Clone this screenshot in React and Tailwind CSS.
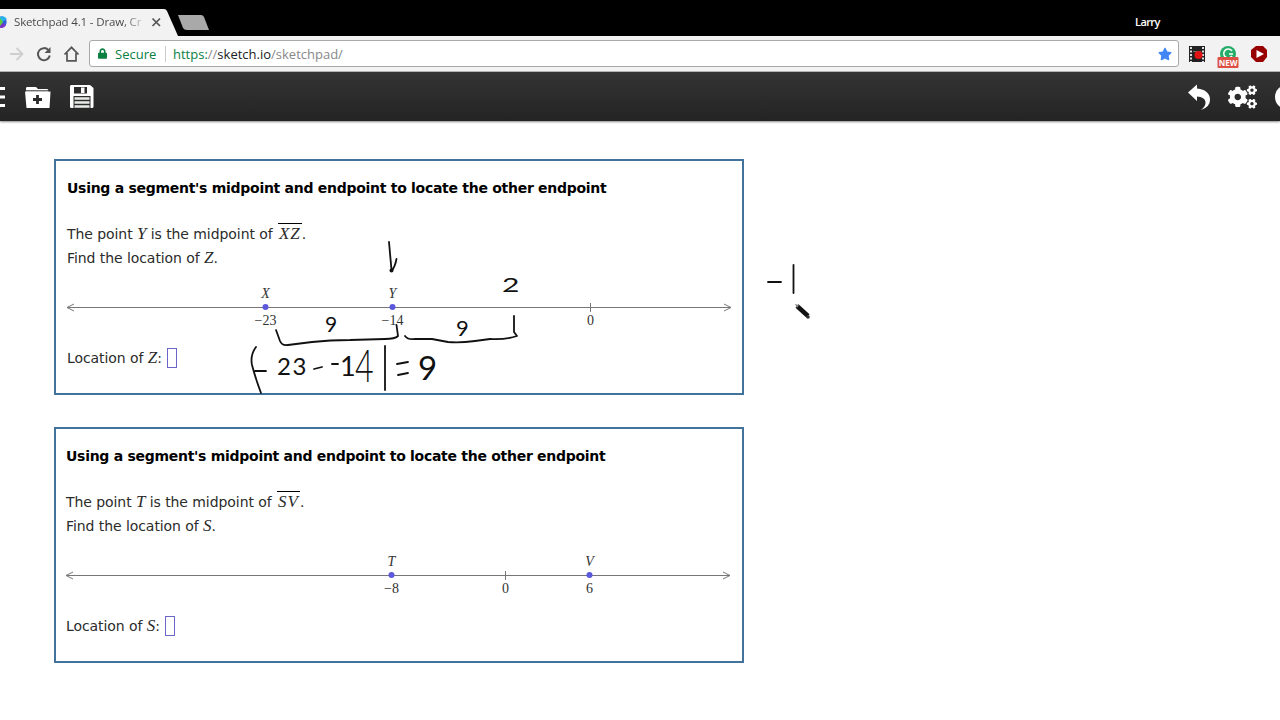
import { FaCogs, FaStar, FaLock } from 'react-icons/fa';

const PROBLEMS = [
    {
        mid: 'Y', seg: 'XZ', find: 'Z', pad: 'pl-px',
        ticks: [
            { x: 209, label: 'X', value: '−23', dot: true },
            { x: 336, label: 'Y', value: '−14', dot: true },
            { x: 534, value: '0' },
        ],
    },
    {
        mid: 'T', seg: 'SV', find: 'S', pad: 'pl-0',
        ticks: [
            { x: 336, label: 'T', value: '−8', dot: true },
            { x: 450, value: '0' },
            { x: 534, label: 'V', value: '6', dot: true },
        ],
    },
];

const BrowserTabs = () => (
    <div className="h-9 bg-black flex items-end relative">
        <svg className="w-[212px] h-[27px] shrink-0" viewBox="0 0 212 27">
            <path d="M0 0H164Q166 0 167 2L178 27H0Z" fill="#f2f2f2" />
            <path d="M178 6H201Q203 6 204 8L209 21H187Q184 21 183 19Z" fill="#a9a9a9" />
            {/* Favicon */}
            <path d="M0 7.500H3A6 6 0 0 1 3 18.500H0Z" fill="#2f62d9" />
            <path d="M0 8Q4 6 7 10L0 14Z" fill="#27b2e8" />
            <path d="M0 13L6 16Q4 19.500 0 19Z" fill="#7a35c4" />
            <path d="M0 9L3 13L0 17Z" fill="#5fce3a" />
            <path d="M152.500 9.500L160 17M160 9.500L152.500 17" stroke="#555" strokeWidth="1.700" />
        </svg>
        <div className="absolute left-[14px] top-[14px] w-[133px] whitespace-nowrap text-[11.5px] tracking-[-0.16px] leading-4 bg-gradient-to-r from-[#444] from-82% to-[#f2f2f2] bg-clip-text text-transparent">
            Sketchpad 4.1 - Draw, Cr
        </div>
        <span className="absolute left-[1135px] top-[14px] text-[11px] tracking-[-0.6px] leading-4 font-semibold text-white">Larry</span>
    </div>
);

const AddressBar = () => (
    <div className="h-9 bg-[#f2f2f2] border-b border-[#b5b5b5] flex items-center">
        <svg className="w-[89px] h-9 shrink-0" viewBox="0 0 89 36" fill="none">
            <path d="M10 18H22M16.500 12L22.500 18L16.500 24" stroke="#cfcfcf" strokeWidth="1.800" />
            <path d="M48.500 14.200A6 6 0 1 0 49.800 19.500" stroke="#555" strokeWidth="2" />
            <path d="M50.500 11V17H44.500Z" fill="#555" />
            <path d="M64.500 18.500L71.500 11.300L78.500 18.500M67 17V24.800H76V17" stroke="#555" strokeWidth="1.700" />
        </svg>
        <div className="w-[1090px] h-[27px] bg-white border border-[#a9a9a9] rounded-[3px] flex items-center text-[13px] leading-5 pl-2 pr-1.5">
            <FaLock className="w-[9px] h-[11px] text-[#0b8043] mr-[8px]" />
            <span className="text-[#0b8043] w-[50px] whitespace-nowrap">Secure</span>
            <span className="w-px h-4 bg-[#ccc] mr-[7px]" />
            <span className="whitespace-nowrap text-[#888]">
                <span className="text-[#0b8043]">https:</span>//<span className="text-[#222]">sketch.io</span>/sketchpad/
            </span>
            <FaStar className="ml-auto w-[14px] h-[14px] text-[#4285f4]" />
        </div>
        <Extensions />
    </div>
);

const Extensions = () => (
    <svg className="w-[101px] h-9 shrink-0" viewBox="0 0 101 36">
        <rect x="10" y="10" width="16" height="16" fill="#222" />
        <path d="M12 11V26M24 11V26" stroke="#ddd" strokeWidth="2" strokeDasharray="2 1.500" />
        <path d="M14 15.500H22" stroke="#777" strokeWidth="1" />
        <circle cx="19.500" cy="19" r="4" fill="#e11313" />
        <circle cx="49" cy="18" r="8" fill="#24ad69" />
        <path d="M53 15A4.500 4.500 0 1 0 53 20M50 18H54" stroke="white" strokeWidth="1.500" fill="none" />
        <rect x="38.500" y="21" width="21" height="11" rx="1" fill="#dd5044" />
        <text x="49" y="29.500" textAnchor="middle" fontSize="8" fontWeight="700" fill="white">NEW</text>
        <path d="M77 10H84L88 14V21L84 26H77L72 21V14Z" fill="#980000" />
        <path d="M77.500 14L85 18L77.500 22Z" fill="white" />
    </svg>
);

const Toolbar = () => (
    <div className="h-[49px] bg-linear-to-b from-[#343434] to-[#242424] flex items-center shadow-[0_1px_2px_#888]">
        <svg className="w-[100px] h-[49px]" viewBox="0 0 100 49">
            <path d="M0 16.500H5M0 25H5M0 33.500H5" stroke="white" strokeWidth="3" />
            {/* New document */}
            <path d="M26 20V16Q26 15 27.500 15H36L38 17H47Q48.500 17 48.500 20Z" fill="white" />
            <path d="M25 19.500H50.500L49.500 36H26.500Z" fill="white" />
            <path d="M25.500 18.800H50" stroke="#333" strokeWidth="1" />
            <path d="M37.500 23V32M33 27.500H42" stroke="#2b2b2b" strokeWidth="2.800" />
            {/* Save */}
            <path d="M71 13H90L93.500 16V34.500Q93.500 36 92 36H71.500Q70 36 70 34.500V14.500Q70 13 71 13Z" fill="white" />
            <path d="M74 15H87V21.500H74ZM73.500 24H90.500V36H73.500Z" fill="#2d2d2d" />
            <rect x="81" y="15.500" width="3.500" height="5.500" fill="white" />
            <path d="M74.500 26.500H89.500M74.500 30.500H89.500M74.500 34.500H89.500" stroke="#e8ece8" strokeWidth="2.300" />
        </svg>
        <svg className="ml-auto w-[26px] h-[30px]" viewBox="0 0 26 30">
            <path d="M2 10.500L11 2.500V6.500Q24 8 24 18Q24 25 15 28Q20 24 19.500 20Q19 15 11 14.500V19Z" fill="white" />
        </svg>
        <FaCogs className="ml-[16px] w-[29px] h-[28px] text-white" />
        <svg className="ml-[18px] w-[5px] h-6" viewBox="0 0 5 24">
            <circle cx="12" cy="12" r="12" fill="white" />
        </svg>
    </div>
);

const Var = ({ children }) => (
    <i className="font-['Liberation_Serif',serif] text-[17px] leading-none">{children}</i>
);

const NumberLine = ({ ticks }) => (
    <svg className="block w-[686px] h-[50px]" viewBox="0 0 686 50" fontFamily="'Liberation Serif', serif">
        <path d="M10 26.500H674M17 23L10 26.500L17 30M667 23L674 26.500L667 30" stroke="#777" fill="none" />
        {ticks.map((t) => (
            <g key={t.x} textAnchor="middle" fontSize="14" fill="#333">
                {t.label && <text x={t.x - 0.500} y="17" fontStyle="italic">{t.label}</text>}
                {t.dot
                    ? <circle cx={t.x - 0.500} cy="26" r="3" fill="#5b58dc" />
                    : <path d={`M${t.x - 0.500} 22V31`} stroke="#777" />}
                <text x={t.x - 0.500} y="44">{t.value}</text>
            </g>
        ))}
    </svg>
);

const ProblemCard = ({ problem }) => (
    <section className="w-[690px] h-[236px] border-2 border-[#42739c] bg-white text-[#2b2b2b] font-['DejaVu_Sans',sans-serif] text-[14px]">
        <div className={problem.pad}>
            <h2 className="pl-[10px] pt-[15px] leading-6 font-bold text-black whitespace-nowrap tracking-[-0.28px]">
                Using a segment's midpoint and endpoint to locate the other endpoint
            </h2>
            <div className="pl-[10px] pt-[23px] leading-[23.500px] tracking-[-0.07px] whitespace-nowrap">
                <p className="h-[23.500px]">
                    The point <Var>{problem.mid}</Var> is the midpoint of{' '}
                    <span className="inline-block leading-[20px] border-t border-black px-px tracking-[1px] ml-px"><Var>{problem.seg}</Var></span>.
                </p>
                <p className="h-[23.500px]">Find the location of <Var>{problem.find}</Var>.</p>
            </div>
            <div className="pt-[11px]">
                <NumberLine ticks={problem.ticks} />
            </div>
            <div className="pl-[10px] pt-[15px] flex items-center leading-6 tracking-[-0.07px]">
                <span className="whitespace-nowrap">Location of <Var>{problem.find}</Var>:</span>
                <span className="ml-[5px] w-[10px] h-5 border border-[#6b67c8]" />
            </div>
        </div>
    </section>
);

// Pen strokes over the worksheet; origin is the canvas corner
const Ink = () => (
    <svg className="absolute left-0 top-0 w-[1280px] h-[599px] pointer-events-none" viewBox="0 121 1280 599" fill="none">
        <g stroke="#111" strokeWidth="1.800" strokeLinecap="round" strokeLinejoin="round">
            <path d="M389 242L391.500 270M391.500 271Q395 267 396.500 259" />
            <path d="M276 330L280 341Q282 346 288 345L312 342Q330 340 350 340L385 339Q395 339 398 336L396.500 325" />
            <path d="M405 336Q408 340 415 339L432 339L448 342Q460 343 475 341L490 339Q505 340 517 336L514 332V316" />
            <path d="M256 347Q250 355 252 365Q256 380 261 393M255 371H266" />
            <path d="M314 369L322 367M332 364H338M385 346V390M397 364L408 362M398 375L408 373" />
            <path d="M768 282H781M793.500 265V293" />
        </g>
        <circle cx="391.500" cy="270.500" r="2" fill="#111" />
        <g fill="#111" fontFamily="Lato, sans-serif">
            <text x="325" y="332" fontSize="21">9</text>
            <text x="456" y="336" fontSize="22">9</text>
            <text transform="translate(502 292) scale(1.500 1)" fontSize="20">2</text>
            <text x="277" y="375" fontSize="24" letterSpacing="1.500">23</text>
            <text x="340" y="376" fontSize="27">1</text>
            <text transform="translate(355 382) scale(0.700 1)" fontSize="46" fontWeight="300">4</text>
            <text x="418" y="380" fontSize="33">9</text>
        </g>
        {/* Pencil cursor */}
        <path d="M797 306L808 316" stroke="#111" strokeWidth="4.500" />
        <path d="M795 304L799 305L797 308Z" fill="#888" />
        <circle cx="808" cy="317" r="1.800" fill="#333" />
    </svg>
);

export default function App() {
    return (
        <div className="w-[1280px] h-[720px] bg-white overflow-hidden flex flex-col font-['Open_Sans','Noto_Sans',sans-serif]">
            <BrowserTabs />
            <AddressBar />
            <Toolbar />
            <main className="relative flex-1 pt-[38px] pl-[54px] flex flex-col gap-8">
                {PROBLEMS.map((p) => <ProblemCard key={p.mid} problem={p} />)}
                <Ink />
            </main>
        </div>
    );
}
